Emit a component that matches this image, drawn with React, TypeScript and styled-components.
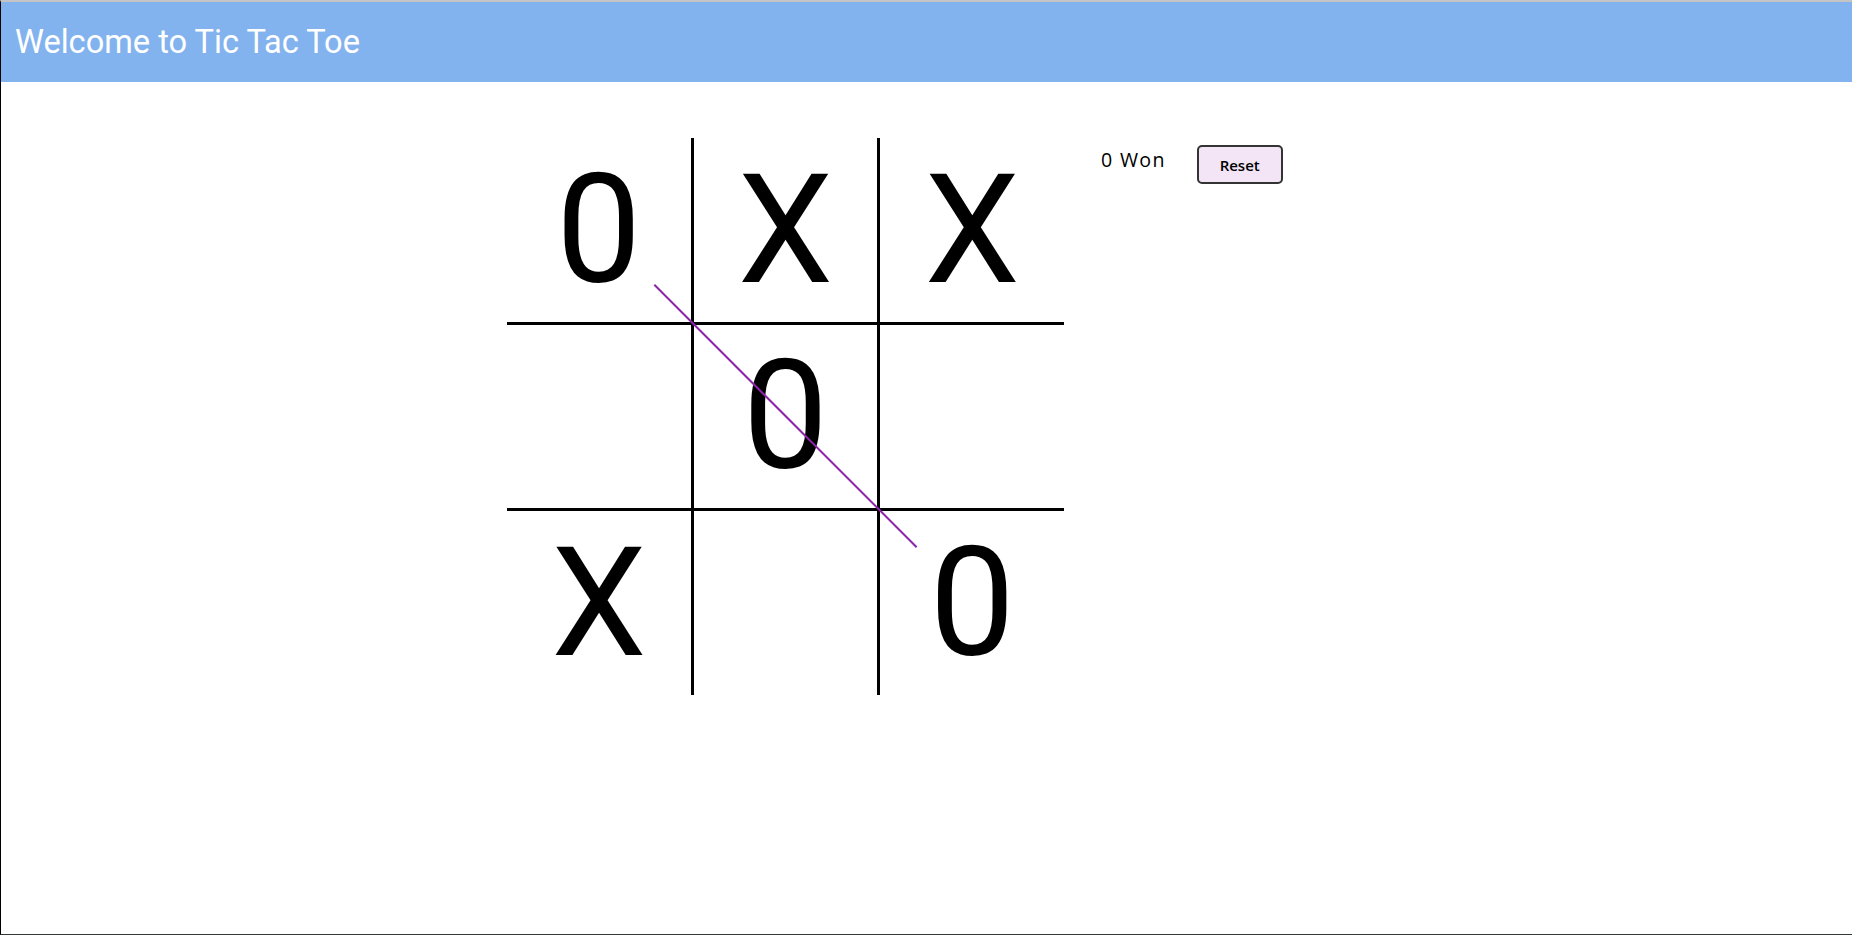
import React, { useState } from 'react';
import styled, { createGlobalStyle } from 'styled-components';

type Mark = '0' | 'X' | '';

const initialBoard: Mark[] = ['0', 'X', 'X', '', '0', '', 'X', '', '0'];

const GlobalStyle = createGlobalStyle`
  html, body {
    margin: 0;
    padding: 0;
    background: #ffffff;
  }

  * {
    box-sizing: border-box;
  }
`;

const App: React.FC = () => {
  const [board, setBoard] = useState<Mark[]>(initialBoard);
  const [wins, setWins] = useState(0);

  function reset() {
    setBoard(Array(9).fill(''));
    setWins(0);
  }

  return (
    <Page>
      <GlobalStyle />
      <Header>
        <Title>Welcome to Tic Tac Toe</Title>
      </Header>
      <Main>
        <Board>
          {board.map((mark, i) => (
            <Cell key={i}>{mark}</Cell>
          ))}
          {board[0] === '0' && <WinLine />}
        </Board>
        <Side>
          <Score>{wins} Won</Score>
          <ResetButton onClick={reset}>Reset</ResetButton>
        </Side>
      </Main>
    </Page>
  );
};

const Page = styled.div`
  height: 100vh;
  border-top: 2px solid #c4c4c4;
  border-left: 1px solid #000000;
  border-bottom: 1px solid #2f3a3a;
  display: flex;
  flex-direction: column;
`;

const Header = styled.header`
  height: 80px;
  flex-shrink: 0;
  background: #83b3ee;
  display: flex;
  align-items: center;
  padding-left: 14px;
`;

const Title = styled.h1`
  margin: 0;
  font-family: Roboto, 'Liberation Sans', sans-serif;
  font-weight: 400;
  font-size: 32.6px;
  color: #ffffff;
`;

const Main = styled.main`
  display: flex;
  justify-content: center;
  align-items: flex-start;
  padding-top: 56px;
`;

const Board = styled.div`
  position: relative;
  width: 557px;
  height: 557px;
  display: grid;
  grid-template-columns: repeat(3, 1fr);
  grid-template-rows: repeat(3, 1fr);
  gap: 3px;
  background: #000000;
`;

const Cell = styled.div`
  background: #ffffff;
  display: flex;
  align-items: center;
  justify-content: center;
  font-family: Roboto, 'Liberation Sans', sans-serif;
  font-size: 152px;
  line-height: 1;
  color: #000000;
  cursor: pointer;
`;

const WinLine = styled.div`
  position: absolute;
  left: 93px;
  top: 277px;
  width: 371px;
  height: 2px;
  background: #8e24aa;
  transform: rotate(45deg);
`;

const Side = styled.aside`
  width: 282px;
  padding-left: 37px;
  margin-top: 7px;
  display: flex;
  align-items: flex-start;
  gap: 31px;
`;

const Score = styled.span`
  margin-top: 1px;
  font-family: 'Open Sans', sans-serif;
  font-size: 19.6px;
  letter-spacing: 1.3px;
  color: #000000;
`;

const ResetButton = styled.button`
  width: 86px;
  height: 39px;
  background: #f3e5f5;
  border: 2px solid #333333;
  border-radius: 5px;
  font-family: 'Open Sans', sans-serif;
  font-weight: 600;
  font-size: 15px;
  color: #000000;
  cursor: pointer;
`;

export default App;
